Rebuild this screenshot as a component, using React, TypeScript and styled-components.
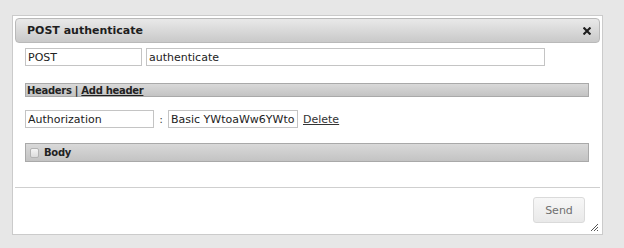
import styled, { createGlobalStyle } from 'styled-components';

const GlobalStyle = createGlobalStyle`
  html, body {
    margin: 0;
    padding: 0;
    background: #e7e7e7;
  }
  body {
    font-family: "DejaVu Sans", Verdana, sans-serif;
    color: #222;
  }
`;

const Page = styled.div`
  width: 624px;
  height: 248px;
  box-sizing: border-box;
  padding: 15px 0 0 12px;
  background: #e7e7e7;
`;

const Dialog = styled.div`
  width: 591px;
  height: 220px;
  box-sizing: border-box;
  border: 1px solid #cbcbcb;
  padding: 2px;
  background: #fff;
  display: flex;
  flex-direction: column;
  position: relative;
`;

const TitleBar = styled.div`
  height: 25px;
  box-sizing: border-box;
  border: 1px solid #b9b9b9;
  border-radius: 4px;
  background: linear-gradient(#e9e9e9, #c9c9c9);
  display: flex;
  align-items: center;
  justify-content: space-between;
  padding: 0 8px 0 11px;
`;

const Title = styled.span`
  font-size: 11px;
  font-weight: bold;
  color: #1e1e1e;
`;

const CloseButton = styled.span`
  display: flex;
  width: 8px;
  height: 8px;
`;

const Content = styled.div`
  flex: 1;
  padding: 5px 11px 0 10px;
  display: flex;
  flex-direction: column;
`;

const Row = styled.div<{ $top: number }>`
  display: flex;
  align-items: center;
  margin-top: ${(p) => p.$top}px;
`;

const Input = styled.input<{ $w: number; $gap?: number }>`
  width: ${(p) => p.$w}px;
  height: 18px;
  box-sizing: border-box;
  border: 1px solid #c4c4c4;
  padding: 0 2px;
  margin: 0 0 0 ${(p) => p.$gap ?? 0}px;
  font-family: "DejaVu Sans", Verdana, sans-serif;
  font-size: 11px;
  color: #222;
  background: #fff;
  outline: none;
`;

const Colon = styled.span`
  font-size: 11px;
  color: #444;
  width: 14px;
  text-align: center;
`;

const LinkText = styled.a`
  font-size: 11px;
  color: #333;
  text-decoration: underline;
  margin-left: 5px;
  cursor: pointer;
`;

const SectionBar = styled.div<{ $h: number; $top: number }>`
  height: ${(p) => p.$h}px;
  margin-top: ${(p) => p.$top}px;
  box-sizing: border-box;
  border: 1px solid #a9a9a9;
  background: linear-gradient(#d9d9d9, #c3c3c3);
  display: flex;
  align-items: center;
  padding-left: 1px;
  font-size: 10px;
  font-weight: bold;
  letter-spacing: -0.3px;
  color: #222;
  white-space: pre;
  a {
    color: #222;
    text-decoration: underline;
  }
`;

const Check = styled.span`
  width: 9px;
  height: 10px;
  box-sizing: border-box;
  border: 1px solid #b3b3b3;
  border-radius: 2px;
  background: linear-gradient(#f4f4f4, #dcdcdc);
  margin: 0 5px 0 3px;
`;

const ButtonPane = styled.div`
  height: 45px;
  box-sizing: border-box;
  border-top: 1px solid #cfcfcf;
  display: flex;
  justify-content: flex-end;
  align-items: flex-start;
  padding: 9px 15px 0 0;
`;

const Button = styled.button`
  width: 52px;
  height: 26px;
  box-sizing: border-box;
  border: 1px solid #dadada;
  border-radius: 3px;
  background: linear-gradient(#f7f7f7, #e9e9e9);
  font-family: "DejaVu Sans", Verdana, sans-serif;
  font-size: 11px;
  color: #6f6f6f;
  padding: 0;
`;

const Grip = styled.span`
  position: absolute;
  right: 3px;
  bottom: 2px;
  width: 10px;
  height: 10px;
  display: flex;
`;

export default function App() {
  return (
    <>
      <GlobalStyle />
      <Page>
        <Dialog>
          <TitleBar>
            <Title>POST authenticate</Title>
            <CloseButton>
              <svg width="8" height="8" viewBox="0 0 8 8">
                <path d="M1.3 1.3 L6.7 6.7 M6.7 1.3 L1.3 6.7" stroke="#1e1e1e" strokeWidth="2.1" strokeLinecap="square" />
              </svg>
            </CloseButton>
          </TitleBar>
          <Content>
            <Row $top={0}>
              <Input $w={117} defaultValue="POST" />
              <Input $w={399} $gap={4} defaultValue="authenticate" />
            </Row>
            <SectionBar $h={14} $top={17}>
              {'Headers | '}<a>Add header</a>
            </SectionBar>
            <Row $top={13}>
              <Input $w={129} defaultValue="Authorization" />
              <Colon>:</Colon>
              <Input $w={130} defaultValue="Basic YWtoaWw6YWtoaWw=" />
              <LinkText>Delete</LinkText>
            </Row>
            <SectionBar $h={19} $top={15}>
              <Check />
              Body
            </SectionBar>
          </Content>
          <ButtonPane>
            <Button>Send</Button>
          </ButtonPane>
          <Grip>
            <svg width="10" height="10" viewBox="0 0 10 10">
              <path d="M9 2 L2 9 M9 5 L5 9 M9 8 L8 9" stroke="#555" strokeWidth="1" />
            </svg>
          </Grip>
        </Dialog>
      </Page>
    </>
  );
}
